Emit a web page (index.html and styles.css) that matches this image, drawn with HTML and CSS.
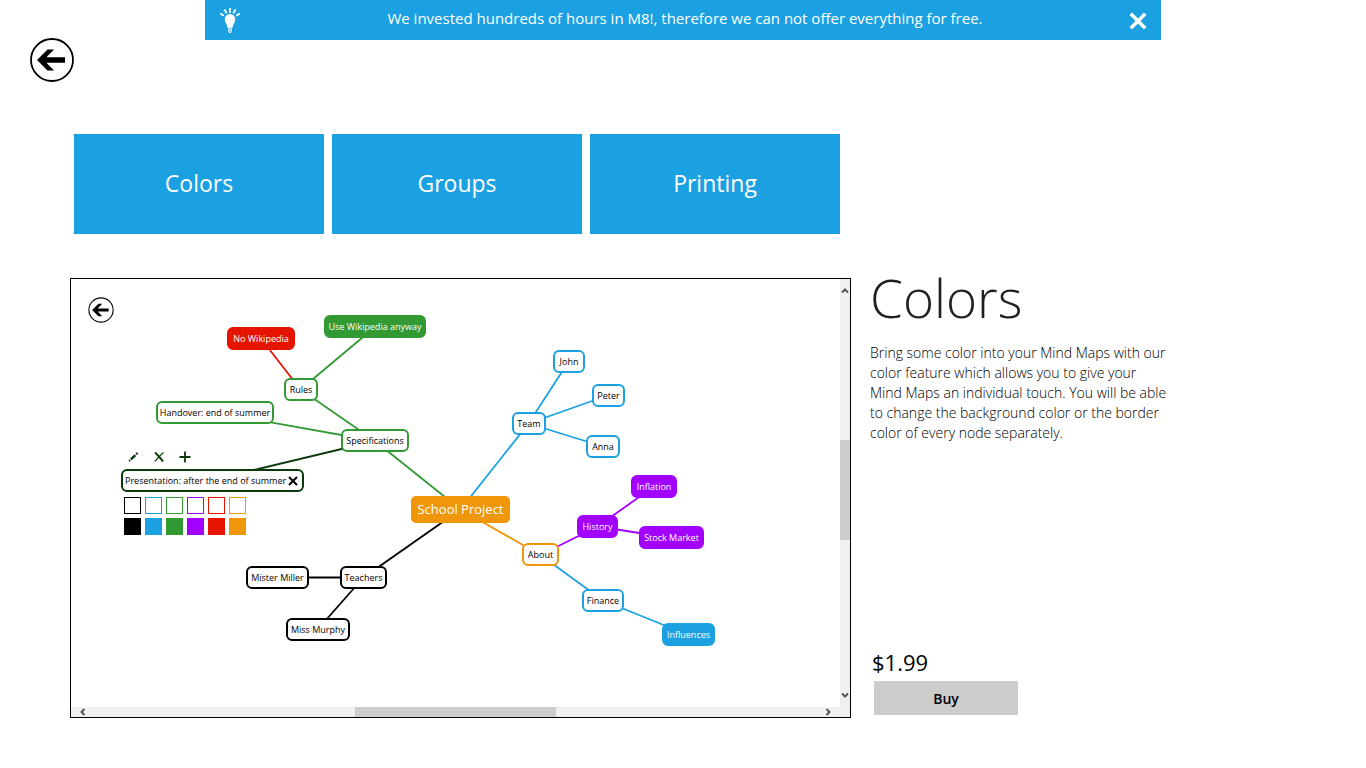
FILE: index.html
```html
<!DOCTYPE html>
<html lang="en">
<head>
<meta charset="utf-8">
<title>M8! Store</title>
<link rel="stylesheet" href="styles.css">
</head>
<body>
<svg class="defs" width="0" height="0" aria-hidden="true">
  <symbol id="arrow" viewBox="0 0 44 44"><path d="M7 22 17.500 11.500H24L16.500 19.300H35v5.400H16.500L24 32.500h-6.500z"/></symbol>
</svg>
<header class="top">
  <button class="back" aria-label="Back">
    <svg width="44" height="44" viewBox="0 0 44 44"><circle cx="22" cy="22" r="21" fill="none" stroke="#000" stroke-width="1.800"/><use href="#arrow"/></svg>
  </button>
  <div class="banner">
    <svg class="bulb" width="22" height="28" viewBox="0 0 22 28" aria-hidden="true">
      <g stroke="#fff" stroke-width="1.800" fill="none"><path d="M11 2v5M5.400 3.600 7.700 7.300M16.600 3.600 14.300 7.300M1.200 7.500 4.800 9.700M20.800 7.500 17.200 9.700"/><path d="M9 22.800h4M9 24.800h4" stroke-width="1.300"/></g>
      <path fill="#fff" d="M11 8a5.300 5.300 0 0 1 5.300 5.300c0 3-2.300 4.700-2.800 8.500h-5c-.5-3.800-2.800-5.500-2.800-8.500A5.300 5.300 0 0 1 11 8zM9.500 26h3l-.6 1h-1.800z"/>
    </svg>
    <p class="notice">We invested hundreds of hours in M8!, therefore we can not offer everything for free.</p>
    <button class="dismiss" aria-label="Close">
      <svg width="18" height="18" viewBox="0 0 18 18"><path d="M3 4l12 12M15 4 3 16" stroke="#fff" stroke-width="3.500" stroke-linecap="square" fill="none"/></svg>
    </button>
  </div>
</header>

<nav class="tiles">
  <button class="tile">Colors</button>
  <button class="tile">Groups</button>
  <button class="tile">Printing</button>
</nav>

<main class="product">
  <section class="preview" aria-label="Preview">
    <div class="canvas">
      <svg class="links" width="769" height="428" viewBox="0 0 769 428" fill="none" stroke-width="1.800" aria-hidden="true">
        <path stroke="#339933" d="M389.500 230.500 304 162 229.500 110.500 304 48M304 162 144 133.500"/>
        <path stroke="#0a3a0a" d="M304 162 133 203"/>
        <path stroke="#e51400" d="M229.500 110.500 189.500 59"/>
        <path stroke="#1ba1e2" d="M389.500 230.500 457.500 144.500 498 82M457.500 144.500 538 116M457.500 144.500 532 167.500"/>
        <path stroke="#f09609" d="M389.500 230.500 469.500 276"/>
        <path stroke="#a200ff" d="M469.500 276 526.500 247.500 583 207.500M526.500 247.500 600.500 259"/>
        <path stroke="#1ba1e2" d="M469.500 276 532 321.500 617.500 356"/>
        <path stroke="#000" d="M389.500 230.500 292.500 298.500H207M292.500 298.500 247 350"/>
      </svg>
      <button class="map-back" aria-label="Back to maps">
        <svg width="26" height="26" viewBox="0 0 44 44"><circle cx="22" cy="22" r="20.500" fill="none" stroke="#000" stroke-width="1.800"/><use href="#arrow"/></svg>
      </button>
      <div class="node red solid no-wiki">No Wikipedia</div>
      <div class="node green solid use-wiki">Use Wikipedia anyway</div>
      <div class="node green rules">Rules</div>
      <div class="node green handover">Handover: end of summer</div>
      <div class="node green specs">Specifications</div>
      <div class="node orange solid root">School Project</div>
      <div class="node blue john">John</div>
      <div class="node blue peter">Peter</div>
      <div class="node blue team">Team</div>
      <div class="node blue anna">Anna</div>
      <div class="node purple solid inflation">Inflation</div>
      <div class="node purple solid history">History</div>
      <div class="node purple solid stock">Stock Market</div>
      <div class="node orange about">About</div>
      <div class="node blue finance">Finance</div>
      <div class="node blue solid influences">Influences</div>
      <div class="node black miller">Mister Miller</div>
      <div class="node black teachers">Teachers</div>
      <div class="node black murphy">Miss Murphy</div>

      <div class="editor">
        <div class="tools">
          <button aria-label="Edit"><svg width="16" height="16" viewBox="0 0 16 16"><path d="M3.500 12.800 4.300 10.300 6 12zM5 9.600l4.600-4.300 1.600 1.600L6.700 11.300zM10.400 4.500l1.400-1.300 1.600 1.500-1.400 1.400z" fill="#0a3a0a"/></svg></button>
          <button aria-label="Delete"><svg width="16" height="16" viewBox="0 0 16 16"><path d="M4 3.500c2.500 2 5 5.500 8 9" stroke="#0a3a0a" stroke-width="2" fill="none"/><path d="M12.500 3.500C9 6 7 9 3.800 12.500" stroke="#0a3a0a" stroke-width="1.200" fill="none"/></svg></button>
          <button aria-label="Add"><svg width="16" height="16" viewBox="0 0 16 16"><path d="M8 2.500v11M2.500 8h11" stroke="#0a3a0a" stroke-width="1.800"/></svg></button>
        </div>
        <div class="node selected">
          <span>Presentation: after the end of summer</span>
          <button aria-label="Clear"><svg width="10" height="10" viewBox="0 0 10 10"><path d="M1 1l8 8M9 1 1 9" stroke="#000" stroke-width="2"/></svg></button>
        </div>
        <div class="swatches">
          <button class="black" aria-label="Black border"></button>
          <button class="blue" aria-label="Blue border"></button>
          <button class="green" aria-label="Green border"></button>
          <button class="purple" aria-label="Purple border"></button>
          <button class="red" aria-label="Red border"></button>
          <button class="orange" aria-label="Orange border"></button>
          <button class="black solid" aria-label="Black fill"></button>
          <button class="blue solid" aria-label="Blue fill"></button>
          <button class="green solid" aria-label="Green fill"></button>
          <button class="purple solid" aria-label="Purple fill"></button>
          <button class="red solid" aria-label="Red fill"></button>
          <button class="orange solid" aria-label="Orange fill"></button>
        </div>
      </div>
    </div>
    <div class="bar vertical">
      <svg width="10" height="8" viewBox="0 0 10 8"><path d="M2 5.500 5 2.500l3 3" /></svg>
      <span class="lead"></span><span class="thumb"></span><span class="rest"></span>
      <svg width="10" height="8" viewBox="0 0 10 8"><path d="M2 2.500l3 3 3-3"/></svg>
    </div>
    <div class="bar horizontal">
      <svg width="8" height="10" viewBox="0 0 8 10"><path d="M5.500 2 2.500 5l3 3"/></svg>
      <span class="lead"></span><span class="thumb"></span><span class="rest"></span>
      <svg width="8" height="10" viewBox="0 0 8 10"><path d="M2.500 2l3 3-3 3"/></svg>
    </div>
    <div class="corner"></div>
  </section>

  <section class="info">
    <h1>Colors</h1>
    <p class="text">Bring some color into your Mind Maps with our color feature which allows you to give your Mind Maps an individual touch. You will be able to change the background color or the border color of every node separately.</p>
    <p class="price">$1.99</p>
    <button class="buy">Buy</button>
  </section>
</main>
</body>
</html>
```
FILE: styles.css
```css
* { box-sizing: border-box; }
body {
  margin: 0;
  background: #fff;
  color: #000;
  font-family: "Open Sans", "Noto Sans", sans-serif;
}
button {
  margin: 0;
  padding: 0;
  border: 0;
  background: none;
  color: inherit;
  font: inherit;
  cursor: pointer;
}
svg { display: block; }
p, h1 { margin: 0; }
.defs { position: absolute; }

.top {
  display: grid;
  grid-template-columns: 15% 70% 15%;
  align-items: start;
}
.back { justify-self: start; margin: 38px 0 0 30px; }
.banner {
  display: flex;
  align-items: center;
  height: 40px;
  padding: 0 14px;
  background: #1ba1e2;
  color: #fff;
}
.notice { flex: 1; text-align: center; font-size: 15px; line-height: 20px; padding-bottom: 4px; }

.tiles {
  display: grid;
  grid-template-columns: repeat(3, 1fr);
  gap: 8px;
  max-width: 766px;
  margin: 52px 0 0 74px;
}
.tile {
  height: 100px;
  padding-bottom: 2px;
  background: #1ba1e2;
  color: #fff;
  font-size: 23px;
}

.product {
  display: flex;
  gap: 19px;
  max-width: 1100px;
  margin: 44px 0 0 70px;
}
.preview {
  flex: 1;
  min-width: 0;
  display: grid;
  grid-template: 428px 10px / 1fr 10px;
  border: 1px solid #000;
}
.canvas { position: relative; overflow: hidden; }
.links { position: absolute; left: 0; top: 0; }
.map-back { position: absolute; left: 17px; top: 18px; }

.black { --tone: #000; }
.blue { --tone: #1ba1e2; }
.green { --tone: #339933; }
.purple { --tone: #a200ff; }
.red { --tone: #e51400; }
.orange { --tone: #f09609; }

.node {
  position: absolute;
  height: 23px;
  border: 2px solid var(--tone);
  border-radius: 6px;
  background: #fff;
  font-size: 9px;
  line-height: 19px;
  text-align: center;
  white-space: nowrap;
}
.solid { background: var(--tone); color: #fff; }
.no-wiki { left: 156px; top: 48px; width: 68px; }
.use-wiki { left: 253px; top: 36px; width: 102px; }
.rules { left: 213px; top: 99px; width: 34px; }
.handover { left: 85px; top: 122px; width: 118px; }
.specs { left: 270px; top: 150px; width: 68px; }
.root { left: 340px; top: 217px; width: 99px; height: 27px; font-size: 13px; line-height: 23px; border-radius: 5px; }
.john { left: 482px; top: 71px; width: 32px; }
.peter { left: 521px; top: 105px; width: 33px; }
.team { left: 441px; top: 133px; width: 34px; }
.anna { left: 515px; top: 156px; width: 34px; }
.inflation { left: 560px; top: 196px; width: 46px; }
.history { left: 506px; top: 236px; width: 41px; }
.stock { left: 568px; top: 247px; width: 65px; }
.about { left: 451px; top: 264px; width: 37px; }
.finance { left: 511px; top: 310px; width: 42px; }
.influences { left: 591px; top: 344px; width: 53px; }
.miller { left: 175px; top: 287px; width: 63px; }
.teachers { left: 269px; top: 287px; width: 47px; }
.murphy { left: 215px; top: 339px; width: 64px; }

.editor { position: absolute; left: 50px; top: 170px; width: 183px; }
.tools { display: flex; gap: 10px; padding: 0 0 4px 4px; }
.selected {
  --tone: #0a3a0a;
  position: static;
  display: flex;
  justify-content: space-between;
  align-items: center;
  padding: 0 4px 0 2px;
}
.swatches {
  display: grid;
  grid-template-columns: repeat(6, 17px);
  grid-auto-rows: 17px;
  gap: 4px;
  padding: 5px 0 0 3px;
}
.swatches button { border: 1px solid var(--tone); }

.bar { display: flex; align-items: center; background: #f0f0f0; }
.bar path { fill: none; stroke: #555; stroke-width: 2; }
.vertical { flex-direction: column; padding: 8px 0; }
.horizontal { padding: 0 8px; }
.thumb { background: #cdcdcd; }
.vertical .thumb { width: 10px; height: 100px; }
.horizontal .thumb { width: 201px; height: 10px; }
.vertical .lead { flex: 145; }
.vertical .rest { flex: 151; }
.horizontal .lead { flex: 268; }
.horizontal .rest { flex: 268; }
.corner { background: #f0f0f0; }

.info { display: flex; flex-direction: column; width: 300px; padding-bottom: 3px; }
h1 { font-size: 53px; font-weight: 300; line-height: 40px; color: #1f1f1f; }
.text { margin-top: 25px; font-size: 14px; font-weight: 300; line-height: 20px; color: #000; }
.price { margin: auto 0 4px 2px; font-size: 22px; line-height: 30px; }
.buy { width: 144px; height: 34px; margin-left: 4px; background: #ccc; font-size: 14px; font-weight: 600; }
```
